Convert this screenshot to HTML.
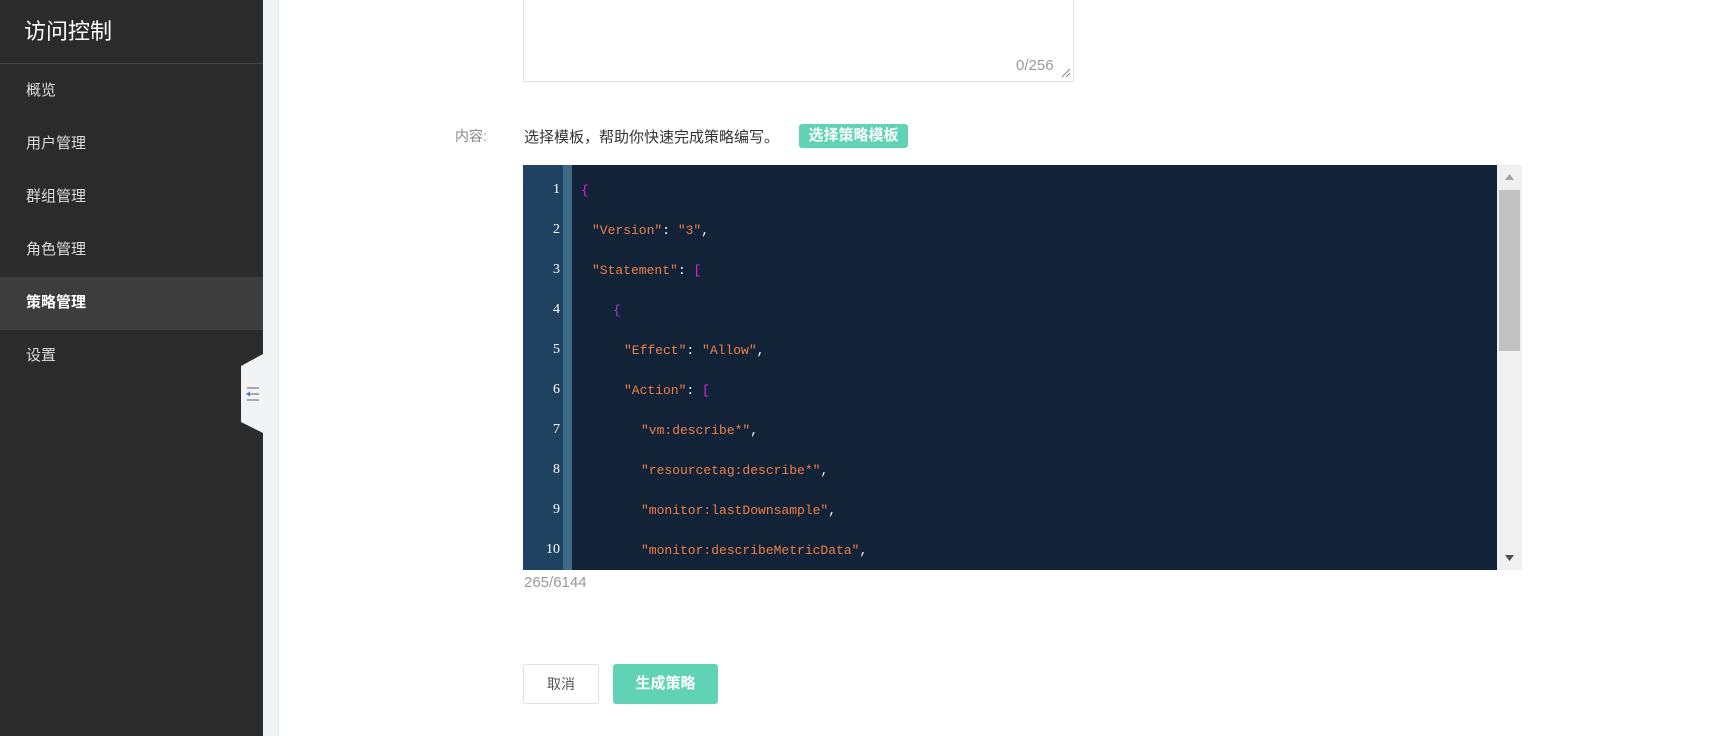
<!DOCTYPE html>
<html><head><meta charset="utf-8"><style>
*{margin:0;padding:0;box-sizing:border-box}
body{width:1718px;height:736px;background:#fff;position:relative;overflow:hidden;font-family:"Liberation Sans","Noto Sans CJK SC",sans-serif}
.a{position:absolute}
.side{left:0;top:0;width:263px;height:736px;background:#2b2b2b}
.title{left:24px;top:14px;color:#fff;font-size:22px}
.div{left:0;top:63px;width:263px;height:1px;background:#444}
.mi{left:26px;color:#ddd;font-size:15px;line-height:20px}
.act{left:0;top:277px;width:263px;height:53px;background:#3d3d3d}
.strip{left:263px;top:0;width:16px;height:736px;background:#f2f3f5;border-right:1px solid #e2e5ea}
.code{left:572px;top:165px;width:925px;height:405px;background:#132337}
.ln{position:absolute;left:0;width:560px;text-align:right;color:#fff;font-family:"Liberation Serif",serif;font-size:14px}
.cl{position:absolute;white-space:pre;color:#fff;font-family:"Liberation Mono","DejaVu Sans Mono",monospace;font-size:13px;line-height:17px}
.s{color:#ef7f47}.m{color:#e020e0}.p{color:#a040d0}
</style></head><body>
<div class="a side"></div>
<div class="a title">访问控制</div>
<div class="a div"></div>
<div class="a act"></div>
<div class="a mi" style="top:81px">概览</div>
<div class="a mi" style="top:134px">用户管理</div>
<div class="a mi" style="top:187px">群组管理</div>
<div class="a mi" style="top:240px">角色管理</div>
<div class="a mi" style="top:293px;color:#fff;font-weight:bold">策略管理</div>
<div class="a mi" style="top:346px">设置</div>
<div class="a strip"></div>
<svg class="a" style="left:241px;top:354px" width="23" height="80"><polygon points="22,0 0,12 0,68 22,79" fill="#f2f3f5"/><g stroke="#778" stroke-width="1.2"><line x1="6" y1="34" x2="18" y2="34"/><line x1="8" y1="40" x2="18" y2="40"/><line x1="6" y1="46" x2="18" y2="46"/></g><polygon points="5,40 9,37.5 9,42.5" fill="#4a7fbf"/></svg>

<div class="a" style="left:523px;top:-2px;width:551px;height:84px;border:1px solid #dde3ea"></div>
<div class="a" style="left:1016px;top:57px;color:#999;font-size:15px">0/256</div>
<svg class="a" style="left:1061px;top:68px" width="10" height="10"><g stroke="#888"><line x1="9" y1="1" x2="1" y2="9"/><line x1="9" y1="5" x2="5" y2="9"/></g></svg>

<div class="a" style="left:455px;top:126px;color:#888;font-size:14px">内容:</div>
<div class="a" style="left:524px;top:126px;color:#333;font-size:15px">选择模板，帮助你快速完成策略编写。</div>
<div class="a" style="left:799px;top:124px;width:109px;height:24px;background:#5fd3b3;border-radius:3px;color:#fff;font-size:15px;font-weight:bold;text-align:center;line-height:24px">选择策略模板</div>

<div class="a" style="left:523px;top:165px;width:40px;height:405px;background:#1f4260"></div>
<div class="a" style="left:563px;top:165px;width:9px;height:405px;background:#3b6b85"></div>
<div class="a code"></div>
<div class="a" style="left:0;top:0">
<div class="ln" style="top:182px">1</div><div class="ln" style="top:222px">2</div><div class="ln" style="top:262px">3</div><div class="ln" style="top:302px">4</div><div class="ln" style="top:342px">5</div><div class="ln" style="top:382px">6</div><div class="ln" style="top:422px">7</div><div class="ln" style="top:462px">8</div><div class="ln" style="top:502px">9</div><div class="ln" style="top:542px">10</div>
<div class="cl" style="left:581px;top:182px"><span class="m">{</span></div>
<div class="cl" style="left:592px;top:222px"><span class="s">"Version"</span>: <span class="s">"3"</span>,</div>
<div class="cl" style="left:592px;top:262px"><span class="s">"Statement"</span>: <span class="m">[</span></div>
<div class="cl" style="left:613px;top:302px"><span class="p">{</span></div>
<div class="cl" style="left:624px;top:342px"><span class="s">"Effect"</span>: <span class="s">"Allow"</span>,</div>
<div class="cl" style="left:624px;top:382px"><span class="s">"Action"</span>: <span class="m">[</span></div>
<div class="cl" style="left:641px;top:422px"><span class="s">"vm:describe*"</span>,</div>
<div class="cl" style="left:641px;top:462px"><span class="s">"resourcetag:describe*"</span>,</div>
<div class="cl" style="left:641px;top:502px"><span class="s">"monitor:lastDownsample"</span>,</div>
<div class="cl" style="left:641px;top:542px"><span class="s">"monitor:describeMetricData"</span>,</div>
</div>
<div class="a" style="left:1497px;top:165px;width:25px;height:405px;background:#f0f0f0"></div>
<div class="a" style="left:1499px;top:190px;width:21px;height:161px;background:#c1c1c1"></div>
<svg class="a" style="left:1497px;top:165px" width="25" height="405"><polygon points="12.5,9 8,15 17,15" fill="#a3a3a3"/><polygon points="12.5,396 8,390 17,390" fill="#505050"/></svg>

<div class="a" style="left:524px;top:574px;color:#999;font-size:15px">265/6144</div>
<div class="a" style="left:523px;top:664px;width:76px;height:40px;border:1px solid #dde3ea;border-radius:3px;color:#555;font-size:14px;text-align:center;line-height:38px">取消</div>
<div class="a" style="left:613px;top:664px;width:105px;height:40px;background:#5fd3b3;border-radius:3px;color:#fff;font-size:15px;font-weight:bold;text-align:center;line-height:40px">生成策略</div>
</body></html>
